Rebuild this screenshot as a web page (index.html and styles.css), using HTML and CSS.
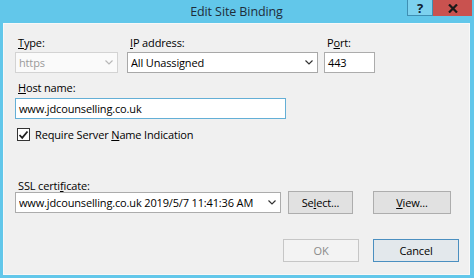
FILE: index.html
```html
<!DOCTYPE html>
<html lang="en">
  <head>
    <meta charset="UTF-8" />
    <title>Edit Site Binding</title>
    <link rel="stylesheet" href="styles.css">
  </head>
  <body>
    <div class="window">
      <div class="titlebar">
        <span class="title">Edit Site Binding</span>
        <div class="caption">
          <span class="capBtn help">?</span>
          <span class="capBtn close">
            <svg width="10" height="9" viewBox="0 0 10 9">
              <path d="M1 0.5 L9 8.5 M9 0.5 L1 8.5" stroke="#1a1a1a" stroke-width="2.2" />
            </svg>
          </span>
        </div>
      </div>
      <div class="client">
        <div class="bindingRow">
          <div class="field">
            <label class="lbl"><u>T</u>ype:</label>
            <div class="combo disabled type">
              <span>https</span>
              <svg class="chev" width="8" height="5" viewBox="0 0 8 5"><path d="M0.5 0.5 L4 4 L7.5 0.5" fill="none" stroke="#b8b8b8" stroke-width="1.2" /></svg>
            </div>
          </div>
          <div class="field">
            <label class="lbl"><u>I</u>P address:</label>
            <div class="combo ip">
              <span>All Unassigned</span>
              <svg class="chev" width="8" height="5" viewBox="0 0 8 5"><path d="M0.5 0.5 L4 4 L7.5 0.5" fill="none" stroke="#333" stroke-width="1.2" /></svg>
            </div>
          </div>
          <div class="field">
            <label class="lbl">P<u>o</u>rt:</label>
            <div class="textbox port">443</div>
          </div>
        </div>

        <label class="lbl hostLbl"><u>H</u>ost name:</label>
        <div class="textbox host focused">www.jdcounselling.co.uk</div>

        <div class="checkRow">
          <span class="checkbox">
            <svg width="11" height="10" viewBox="0 0 11 10"><path d="M1.5 5 L4.2 7.8 L9.5 1.5" fill="none" stroke="#222" stroke-width="1.8" /></svg>
          </span>
          <span>Require Server <u>N</u>ame Indication</span>
        </div>

        <label class="lbl sslLbl">SSL certi<u>f</u>icate:</label>
        <div class="sslRow">
          <div class="combo ssl">
            <span>www.jdcounselling.co.uk 2019/5/7 11:41:36 AM</span>
            <svg class="chev" width="8" height="5" viewBox="0 0 8 5"><path d="M0.5 0.5 L4 4 L7.5 0.5" fill="none" stroke="#333" stroke-width="1.2" /></svg>
          </div>
          <button class="btn select">Se<u>l</u>ect...</button>
          <button class="btn view"><u>V</u>iew...</button>
        </div>

        <div class="footer">
          <button class="btn ok" disabled>OK</button>
          <button class="btn cancel">Cancel</button>
        </div>
      </div>
    </div>
  </body>
</html>
```

FILE: styles.css
```css
body {
  margin: 0;
  font-family: "Open Sans", "Noto Sans", sans-serif;
  font-size: 11px;
  letter-spacing: -0.15px;
  color: #000;
}
.window {
  width: 474px;
  height: 278px;
  box-sizing: border-box;
  background: #62c7ea;
  padding: 0 4px 3px 3px;
  display: flex;
  flex-direction: column;
}
.titlebar {
  height: 23px;
  flex-shrink: 0;
  position: relative;
  display: flex;
  justify-content: center;
  align-items: center;
}
.title {
  font-size: 12.5px;
  letter-spacing: -0.1px;
  color: #1f2d3a;
  margin-top: -1px;
}
.caption {
  position: absolute;
  top: 0;
  right: -2px;
  display: flex;
}
.capBtn {
  height: 16px;
  display: flex;
  align-items: center;
  justify-content: center;
  box-sizing: border-box;
}
.help {
  width: 26px;
  border: 1px solid #3f8fb3;
  border-top: none;
  background: #7dd2ef;
  font-weight: bold;
  font-size: 13px;
  color: #102030;
}
.close {
  width: 39px;
  background: #c9524f;
}
.client {
  flex: 1;
  background: #f0f0f0;
  border: 1px solid #f8f8f8;
  padding: 11px 0 0 11px;
  display: flex;
  flex-direction: column;
  align-items: flex-start;
}
.lbl {
  display: block;
  padding-left: 3px;
  height: 16px;
  line-height: 16px;
  margin-bottom: 1px;
}
.bindingRow {
  display: flex;
}
.field {
  margin-right: 6px;
}
.field:first-child {
  margin-right: 9px;
}
.combo,
.textbox {
  height: 21px;
  box-sizing: border-box;
  border: 1px solid #acacac;
  background: #fff;
  display: flex;
  align-items: center;
  padding: 0 4px 0 3px;
}
.combo span {
  flex: 1;
  white-space: nowrap;
  overflow: hidden;
}
.chev {
  flex-shrink: 0;
  margin-left: 4px;
}
.combo.disabled {
  border-color: #d3d3d3;
  color: #9a9a9a;
  background: #fafafa;
}
.type {
  width: 103px;
}
.ip {
  width: 191px;
  border-color: #a8a8a8;
}
.port {
  width: 51px;
}
.hostLbl {
  margin-top: 7px;
}
.host {
  width: 271px;
  margin-top: 1px;
}
.focused {
  border-color: #64afd6;
}
.checkRow {
  display: flex;
  align-items: center;
  margin-top: 8px;
  margin-left: 2px;
}
.checkbox {
  width: 13px;
  height: 13px;
  box-sizing: border-box;
  border: 1px solid #333;
  background: #fff;
  display: flex;
  align-items: center;
  justify-content: center;
  margin-right: 5px;
}
.sslLbl {
  margin-top: 36px;
  margin-bottom: -3px;
}
.sslRow {
  display: flex;
  align-items: center;
}
.ssl {
  width: 266px;
}
.btn {
  font-family: inherit;
  font-size: 11px;
  letter-spacing: -0.15px;
  height: 23px;
  box-sizing: border-box;
  border: 1px solid #adadad;
  background: #e1e1e1;
  color: #000;
  padding: 0;
}
.select {
  width: 65px;
  margin-left: 7px;
}
.view {
  width: 78px;
  margin-left: 20px;
}
.footer {
  display: flex;
  margin-top: 25px;
  margin-left: 268px;
}
.ok {
  width: 76px;
  background: #f3f3f3;
  border-color: #c6c6c6;
  color: #8a8a8a;
}
.cancel {
  width: 86px;
  margin-left: 14px;
  border-color: #4b8fc0;
  background: #e3e8ec;
}
```
